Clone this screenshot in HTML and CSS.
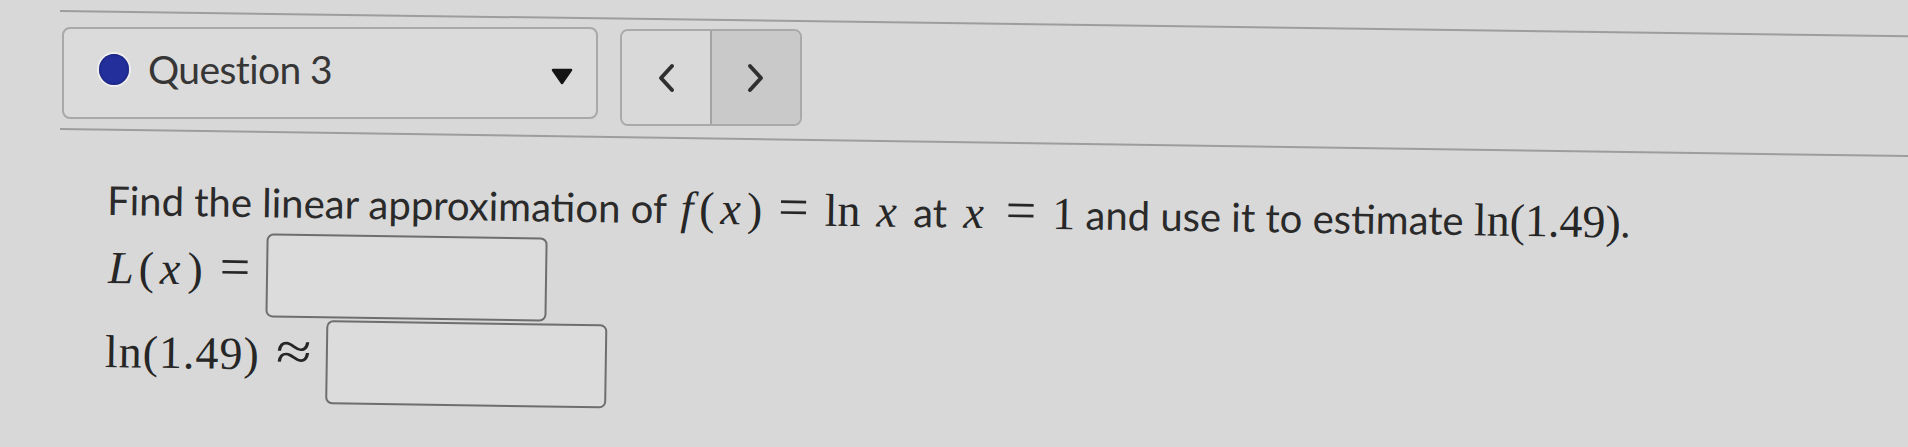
FILE: index.html
```html
<!DOCTYPE html>
<html lang="en">
<head>
<meta charset="utf-8">
<title>Question 3</title>
<link rel="stylesheet" href="styles.css">
</head>
<body>
<div class="page">
  <div class="rule rule-top"></div>
  <header class="toolbar">
    <div class="qselect">
      <span class="dot"></span>
      <span class="qlabel">Question 3</span>
      <svg class="caret" width="22" height="17" viewBox="0 0 22 17"><path d="M2 2 H20 L11 15 Z" fill="#141414" stroke="#141414" stroke-width="2.5" stroke-linejoin="round"/></svg>
    </div>
    <div class="pager">
      <div class="pbtn prev"><svg width="20" height="30" viewBox="0 0 20 30"><polyline points="16,3 5,15 16,27" fill="none" stroke="#303030" stroke-width="4" stroke-linecap="round" stroke-linejoin="round"/></svg></div>
      <div class="pbtn next"><svg width="20" height="30" viewBox="0 0 20 30"><polyline points="4,3 15,15 4,27" fill="none" stroke="#303030" stroke-width="4" stroke-linecap="round" stroke-linejoin="round"/></svg></div>
    </div>
  </header>
  <div class="rule rule-bottom"></div>
  <section class="question">
    <p class="prompt">Find the linear approximation of <span class="math"><i class="mi mf">f</i>(<i class="mi">x</i>)<span class="mo">=</span><span class="fn">ln</span><i class="mi">x</i></span> at <span class="math"><i class="mi">x</i><span class="mo">=</span>1</span> and use it to estimate <span class="math"><span class="fn2">ln</span>(1.49)</span>.</p>
    <div class="row row1"><span class="math"><i class="mi ml">L</i>(<i class="mi mx">x</i>)<span class="mo mo-row">=</span></span><span class="answer a1"></span></div>
    <div class="row row2"><span class="math spaced">ln(1.49)</span><span class="math"><span class="mo mo-row mo-approx">≈</span></span><span class="answer a2"></span></div>
  </section>
</div>
</body>
</html>
```

FILE: styles.css
```css
html, body {
  margin: 0;
  padding: 0;
  background: #d8d8d8;
  overflow: hidden;
}

.page {
  width: 1908px;
  height: 447px;
  overflow: hidden;
  font-family: Lato, "Open Sans", sans-serif;
  color: #2a2a2a;
}

.rule {
  height: 2px;
  background: #9d9d9d;
  margin-left: 60px;
  width: 1900px;
  transform-origin: left center;
}

.rule-top {
  margin-top: 10px;
  transform: rotate(0.78deg);
}

.rule-bottom {
  margin-top: 2px;
  transform: rotate(0.84deg);
}

.toolbar {
  display: flex;
  align-items: flex-start;
  gap: 22px;
  margin-top: 15px;
  padding-left: 62px;
}

.qselect {
  box-sizing: border-box;
  width: 536px;
  height: 92px;
  border: 2px solid #a9a9a9;
  border-radius: 8px;
  background: #dbdbdb;
  display: flex;
  align-items: center;
  padding: 0 23px 7px 35px;
}

.dot {
  width: 30px;
  height: 31px;
  border-radius: 50%;
  background: #23309c;
  box-shadow: 0 0 0 2px #eeeeee, inset 0 0 3px #0e1660;
  flex: none;
}

.qlabel {
  margin-left: 19px;
  font-size: 39px;
  letter-spacing: -0.6px;
  color: #363636;
  line-height: 1;
}

.caret {
  margin-left: auto;
  margin-top: 14px;
}

.pager {
  box-sizing: border-box;
  width: 182px;
  height: 97px;
  margin-top: 2px;
  border: 2px solid #a9a9a9;
  border-radius: 8px;
  overflow: hidden;
  display: flex;
}

.pbtn {
  flex: 1;
  display: flex;
  align-items: center;
  justify-content: center;
  background: #d9d9d9;
}

.pbtn.next {
  background: #c9c9c9;
  border-left: 2px solid #a3a3a3;
}

.question {
  padding-top: 45px;
  padding-left: 107px;
  transform-origin: 107px 80px;
  transform: rotate(0.85deg);
}

.prompt {
  margin: 0;
  font-size: 40px;
  line-height: 50px;
  white-space: nowrap;
}

.math {
  font-family: "Liberation Serif", "Times New Roman", serif;
  font-size: 46px;
  color: #262626;
}

.spaced {
  letter-spacing: 1px;
}

.mi {
  font-style: italic;
  padding: 0 6px;
}

.mf {
  padding: 0 6px 0 4px;
}

.ml {
  padding: 0 5px 0 2px;
}

.mx {
  padding: 0 7px 0 6px;
}

.mo {
  font-size: 54px;
  line-height: 0;
  margin: 0 16px;
}

.mo-row {
  margin: 0 16px 0 17px;
}

.mo-approx {
  display: inline-block;
  transform: scaleX(1.2);
  margin: 0 17px 0 19px;
}

.fn {
  margin-right: 10px;
}

.row {
  line-height: 46px;
  white-space: nowrap;
}

.row1 {
  margin-top: 6px;
}

.row2 {
  margin-top: 2px;
}

.answer {
  display: inline-block;
  box-sizing: border-box;
  width: 281px;
  height: 84px;
  border: 2px solid #6e6e6e;
  border-radius: 7px;
  background: #dcdcdc;
  vertical-align: -32px;
}

.a2 {
  vertical-align: -34px;
}
```
